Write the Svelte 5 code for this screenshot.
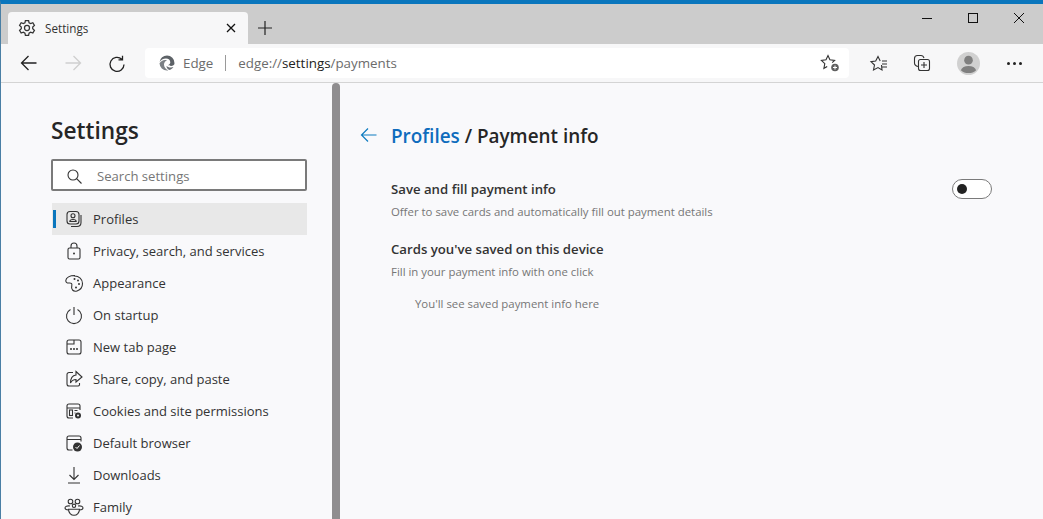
<script>
  const navItems = [
    { label: 'Profiles', icon: 'profiles', active: true },
    { label: 'Privacy, search, and services', icon: 'privacy' },
    { label: 'Appearance', icon: 'appearance' },
    { label: 'On startup', icon: 'startup' },
    { label: 'New tab page', icon: 'newtab' },
    { label: 'Share, copy, and paste', icon: 'share' },
    { label: 'Cookies and site permissions', icon: 'cookies' },
    { label: 'Default browser', icon: 'browser' },
    { label: 'Downloads', icon: 'downloads' },
    { label: 'Family', icon: 'family' }
  ];
</script>

<div class="window">
  <div class="tabstrip">
    <div class="tab">
      <svg width="16" height="16" viewBox="1 0.500 14 14">
        <path d="M6.600 1h2.800l.4 2 1.400.7 1.900-.8 1.400 2.400-1.500 1.300v1.600l1.500 1.300-1.400 2.400-1.900-.7-1.400.8-.4 1.900H6.600l-.4-1.900-1.400-.8-1.900.7L1.500 9.500 3 8.200V6.600L1.500 5.300l1.400-2.400 1.900.8 1.400-.7z" class="line" />
        <circle cx="8" cy="7.500" r="2.200" class="line" />
      </svg>
      <span class="tab-title">Settings</span>
      <svg width="10" height="10" viewBox="0 0 10 10"><path d="M1 1l8 8M9 1l-8 8" stroke="#111" stroke-width="1.300" /></svg>
    </div>
    <svg class="new-tab" width="16" height="16" viewBox="0 0 16 16"><path d="M8 1v14M1 8h14" stroke="#222" stroke-width="1.200" /></svg>
    <div class="window-buttons">
      <svg width="12" height="12" viewBox="0 0 12 12"><path d="M1 6.500h10" stroke="#111" /></svg>
      <svg width="12" height="12" viewBox="0 0 12 12"><rect x="1.500" y="1.500" width="9" height="9" fill="none" stroke="#111" /></svg>
      <svg width="12" height="12" viewBox="0 0 12 12"><path d="M1 1l10 10M11 1L1 11" stroke="#111" /></svg>
    </div>
  </div>

  <div class="toolbar">
    <svg width="16" height="16" viewBox="0 0 16 16"><path d="M.5 8h15M7.500 1L.5 8l7 7" class="line dark" /></svg>
    <svg class="forward" width="16" height="16" viewBox="0 0 16 16"><path d="M.5 8h15M8.500 1l7 7-7 7" class="line faded" /></svg>
    <svg class="reload" width="16" height="17" viewBox="0 0 16 17"><path d="M15 9.500a7 7 0 1 1-2.200-5.200M13.500 .8v4h-4" class="line dark" /></svg>
    <div class="address">
      <svg width="16" height="16" viewBox="0 0 16 16">
        <path d="M8 .5a7.500 7.500 0 0 1 7.500 7.700c0 1.900-1.700 2.700-3.400 2.700-1.300 0-2.500-.4-3.100-.9 1.400-.5 2.300-1.400 2.300-2.600C11.300 5.300 9.600 3.600 7 3.600 4 3.600 1.700 5.400.6 7A7.500 7.500 0 0 1 8 .5z" fill="#5d6267" />
        <path d="M.5 8.300C1.700 6.300 3.800 5 5.900 5c1.300 0 2.100.4 2.100.4C6.200 5.900 5 7.500 5 9.500c0 2.300 1.500 4.700 4.200 5.800-.4.100-.8.200-1.200.2A7.500 7.500 0 0 1 .5 8.300z" fill="#7b8085" />
        <path d="M10.600 15c-1.700-.2-3.300-2.100-3.100-3.900.8.900 2.400 1.500 4.400 1.500 1 0 1.900-.2 2.500-.5-.8 1.300-2.200 2.400-3.800 2.900z" fill="#6a6f74" />
      </svg>
      <span class="edge-label">Edge</span>
      <span class="divider"></span>
      <span class="url">edge://<b>settings</b>/payments</span>
      <svg width="18" height="18" viewBox="0 0 18 18">
        <path d="M11.200 8.600l2.400-2.200-4.700-.6L7 1.500 5 5.800l-4.600.6 3.400 3.200-.9 4.700 3.300-1.900" class="line" />
        <circle cx="14" cy="13.500" r="3.800" fill="#5f5f5f" />
        <path d="M14 11.500v4M12 13.500h4" stroke="#fff" />
      </svg>
    </div>
    <svg class="favorites" width="18" height="17" viewBox="0 0 18 17">
      <path d="M10.200 6L8 1.500 5.700 6 1 6.700 4.500 10l-1 5 4.500-2.400 4 2.400-.5-5M12 6h5M12 9h5M12 12h5" class="line" />
    </svg>
    <svg class="collections" width="16" height="16" viewBox="0 0 16 16">
      <path d="M4 11.500C2 11 .5 9.800.5 8V3.500c0-1.700 1.300-3 3-3h3.500c1.600 0 2.500.8 3 2.500" class="line" />
      <rect x="4.500" y="4.500" width="11" height="11" rx="2" class="line" />
      <path d="M10 7v6M7 10h6" class="line" />
    </svg>
    <span class="avatar">
      <svg width="23" height="23" viewBox="0 0 24 24">
        <circle cx="12" cy="8.500" r="4.500" fill="#7f7f7f" />
        <path d="M4 19c1-3 4-4.500 8-4.500s7 1.500 8 4.500c-2 2-5 3-8 3s-6-1-8-3z" fill="#7f7f7f" />
      </svg>
    </span>
    <span class="more"><i></i><i></i><i></i></span>
  </div>

  <div class="page">
    <aside class="sidebar">
      <h1>Settings</h1>
      <div class="search">
        <svg width="15" height="15" viewBox="0 0 15 15"><circle cx="6" cy="6" r="5" class="line" /><path d="M9.600 9.600L14.500 14.500" class="line" /></svg>
        <span>Search settings</span>
      </div>
      <nav>
        {#each navItems as item}
          <div class="nav-item" class:active={item.active}>
            <svg width="18" height="18" viewBox="0 0 18 18">
              {#if item.icon === 'profiles'}
                <rect x="2" y="1.500" width="12" height="12.500" rx="3" class="line" />
                <circle cx="8" cy="5.700" r="2" class="line" />
                <path d="M4.800 11.500c0-1.500 1.400-2 3.200-2s3.200.5 3.200 2zM16 5v7.500c0 2.500-1.500 4-4 4H6" class="line" />
              {:else if item.icon === 'privacy'}
                <rect x="3" y="6" width="12" height="11" rx="1.500" class="line" />
                <path d="M6 6V4a3 3 0 0 1 6 0v2" class="line" />
                <circle cx="9" cy="11.500" r="1" fill="#333" />
              {:else if item.icon === 'appearance'}
                <path d="M9.500 1.500C5 1.500 1 3.500.8 6.500c-.1 2 1.500 2.800 3.200 2.500 2-.3 3.300.5 2.800 2.500-.4 1.500-.6 3 .7 4.500 1.200 1.200 3 1.400 4.500.9 3.200-1 5.500-4 5.500-7.400 0-4.400-3.500-7.500-8-7.500z" class="line" />
                <circle cx="9.500" cy="5" r="1" fill="#333" /><circle cx="13" cy="6.500" r="1" fill="#333" /><circle cx="14" cy="10" r="1" fill="#333" /><circle cx="11" cy="13.500" r="1" fill="#333" />
              {:else if item.icon === 'startup'}
                <path d="M9 1v8M5.500 3.500a7.500 7.500 0 1 0 7 0" class="line" />
              {:else if item.icon === 'newtab'}
                <rect x="2" y="2" width="14" height="14" rx="2" class="line" />
                <path d="M2 6h7V2" class="line" />
                <path d="M5 11h2M8 11h2M11 11h2" stroke="#333" stroke-width="1.500" />
              {:else if item.icon === 'share'}
                <path d="M8 2.500H4A2 2 0 0 0 2 4.500V14a2 2 0 0 0 2 2h9a2 2 0 0 0 1.500-1v-2" class="line" />
                <path d="M11 1.500L17 7l-6 5V9.500C8 9.500 6.500 11 5.500 13c0-4 2-7.500 5.500-8z" class="line" />
              {:else if item.icon === 'cookies'}
                <path d="M8 16H4a2 2 0 0 1-2-2V4a2 2 0 0 1 2-2h9a2 2 0 0 1 2 2v4M2 6h13" class="line" />
                <rect x="4.500" y="8" width="3" height="5.500" class="line" />
                <path d="M9.500 8.500h3M9.500 11h1" class="line" />
                <circle cx="13" cy="13.500" r="3" fill="#333" />
                <circle cx="13" cy="13.500" r="1" fill="#f9f9fb" />
              {:else if item.icon === 'browser'}
                <path d="M7.500 16H4a2 2 0 0 1-2-2V4a2 2 0 0 1 2-2h10a2 2 0 0 1 2 2v3.500M2 5.500h14" class="line" />
                <circle cx="12.500" cy="13" r="4.500" fill="#333" />
                <path d="M10.500 13l1.500 1.500 2.500-3" stroke="#fff" fill="none" />
              {:else if item.icon === 'downloads'}
                <path d="M9 1v12.500M4.500 9L9 13.500 13.500 9M3 17h12" class="line" />
              {:else}
                <circle cx="5.500" cy="3.500" r="2.300" class="line" />
                <circle cx="12.500" cy="3.500" r="2.300" class="line" />
                <circle cx="9" cy="7.800" r="1.700" class="line" />
                <path d="M5 8C2 7.500 0 8.500 0 10c0 1 1.500 1.800 3.500 2M13 8c3-.5 5 .5 5 2 0 1-1.500 1.800-3.500 2" class="line" />
                <path d="M3.500 11.300h11c0 3.500-2.500 6-5.500 6s-5.500-2.500-5.500-6z" class="line" />
              {/if}
            </svg>
            <span>{item.label}</span>
          </div>
        {/each}
      </nav>
    </aside>
    <div class="scrollbar"></div>
    <main class="content">
      <div class="heading">
        <svg width="16" height="14" viewBox="0 0 16 14"><path d="M.5 7h15M7 .5L.5 7 7 13.500" fill="none" stroke="#0f7cc0" stroke-width="1.200" /></svg>
        <h2><a href="#profiles">Profiles</a> / Payment info</h2>
      </div>
      <section class="settings">
        <div class="row">
          <div>
            <h3>Save and fill payment info</h3>
            <p>Offer to save cards and automatically fill out payment details</p>
          </div>
          <span class="toggle"><i></i></span>
        </div>
        <h3 class="cards">Cards you've saved on this device</h3>
        <p>Fill in your payment info with one click</p>
        <p class="empty">You'll see saved payment info here</p>
      </section>
    </main>
  </div>
</div>

<style>
  :global(body) {
    margin: 0;
    overflow: hidden;
  }
  .window {
    width: 1043px;
    height: 519px;
    overflow: hidden;
    display: flex;
    flex-direction: column;
    border-top: 4px solid #0a76bd;
    border-left: 1px solid #4a7fa5;
    box-sizing: border-box;
    background: #f9f9fb;
    font-family: "Open Sans", "Noto Sans", sans-serif;
    color: #333;
  }
  svg {
    flex: none;
    display: block;
    overflow: visible;
  }
  .line {
    fill: none;
    stroke: #333;
    stroke-width: 1.100;
  }
  .line.dark {
    stroke: #222;
    stroke-width: 1.300;
  }
  .line.faded {
    stroke: #cfcfcf;
    stroke-width: 1.300;
  }
  .tabstrip {
    height: 40px;
    flex: none;
    box-sizing: border-box;
    padding: 8px 0 0 7px;
    display: flex;
    background: #cccccc;
  }
  .tab {
    width: 240px;
    height: 32px;
    box-sizing: border-box;
    padding: 0 12px 0 11px;
    display: flex;
    align-items: center;
    background: #f7f7f8;
    border-radius: 4px 4px 0 0;
  }
  .tab-title {
    margin-left: 10px;
    font-size: 11.700px;
    flex: 1;
    color: #333;
  }
  .new-tab {
    margin: 8px 0 0 9px;
  }
  .window-buttons {
    margin-left: auto;
    padding: 0 18px 0 0;
    display: flex;
    gap: 34px;
  }
  .toolbar {
    height: 39px;
    flex: none;
    box-sizing: border-box;
    border-bottom: 1px solid #d4d4d4;
    display: flex;
    align-items: center;
    background: #f7f7f8;
    padding-left: 20px;
  }
  .forward {
    margin-left: 28px;
  }
  .reload {
    margin-left: 28px;
  }
  .address {
    margin-left: 20px;
    width: 704px;
    height: 30px;
    box-sizing: border-box;
    padding: 0 10px 0 14px;
    display: flex;
    align-items: center;
    background: #fff;
    border-radius: 4px;
    font-size: 13.350px;
    color: #6b6b6b;
  }
  .edge-label {
    margin-left: 8px;
  }
  .divider {
    width: 1px;
    height: 16px;
    margin: 0 12px;
    background: #9a9a9a;
  }
  .url {
    flex: 1;
  }
  .url b {
    font-weight: 400;
    color: #222;
  }
  .favorites {
    margin-left: 21px;
  }
  .collections {
    margin-left: 26px;
  }
  .avatar {
    margin-left: 27px;
    width: 23px;
    height: 23px;
    border-radius: 50%;
    background: #d0d0d0;
    overflow: hidden;
  }
  .more {
    margin-left: 27px;
    display: flex;
    gap: 3px;
  }
  .more i {
    width: 3px;
    height: 3px;
    border-radius: 50%;
    background: #222;
  }
  .page {
    flex: 1;
    min-height: 0;
    display: flex;
  }
  .sidebar {
    width: 331px;
    flex: none;
    box-sizing: border-box;
    padding: 32px 25px 0 50px;
  }
  h1 {
    margin: 0 0 12px;
    font-size: 22.700px;
    line-height: 32px;
    font-weight: 600;
    color: #262626;
  }
  .search {
    height: 32px;
    box-sizing: border-box;
    border: 2px solid #7a7a7a;
    border-radius: 2px;
    background: #fff;
    padding: 2px 0 0 14px;
    display: flex;
    align-items: center;
    gap: 15px;
    font-size: 13.100px;
    color: #767676;
  }
  nav {
    margin-top: 12px;
  }
  .nav-item {
    height: 32px;
    box-sizing: border-box;
    margin-left: 1px;
    padding-left: 13px;
    display: flex;
    align-items: center;
    gap: 10px;
    position: relative;
    font-size: 13px;
    color: #333;
  }
  .nav-item.active {
    background: #e8e8e8;
  }
  .nav-item.active::before {
    content: "";
    position: absolute;
    left: 1px;
    top: 7px;
    width: 3px;
    height: 18px;
    background: #0a76bd;
  }
  .scrollbar {
    width: 8px;
    flex: none;
    background: #8f8d8f;
    border-radius: 4px 4px 0 0;
  }
  .content {
    flex: 1;
    min-width: 0;
    padding: 39px 51px 0 21px;
  }
  .heading {
    display: flex;
    align-items: center;
    gap: 14px;
  }
  .heading svg {
    margin-bottom: 2px;
  }
  h2 {
    margin: 0;
    font-size: 18.900px;
    line-height: 28px;
    font-weight: 600;
    color: #262626;
  }
  h2 a {
    color: #0f6cbd;
    text-decoration: none;
  }
  .settings {
    margin: 29px 0 0 30px;
  }
  .row {
    display: flex;
    justify-content: space-between;
    align-items: flex-start;
  }
  h3 {
    margin: 0;
    font-size: 13.200px;
    line-height: 20px;
    font-weight: 600;
    color: #333;
  }
  .cards {
    margin-top: 19px;
  }
  p {
    margin: 5px 0 0;
    font-size: 11.400px;
    line-height: 16px;
    color: #767676;
  }
  .empty {
    margin: 16px 0 0 24px;
  }
  .toggle {
    width: 40px;
    height: 20px;
    box-sizing: border-box;
    border: 1px solid #7a7a7a;
    border-radius: 10px;
    background: #fff;
    padding-left: 4px;
    display: flex;
    align-items: center;
  }
  .toggle i {
    width: 10px;
    height: 10px;
    border-radius: 50%;
    background: #222;
  }
</style>
